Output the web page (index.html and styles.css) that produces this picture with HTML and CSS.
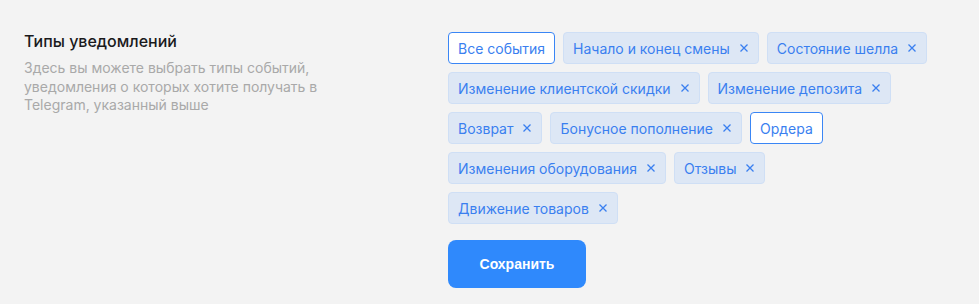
FILE: index.html
```html
<!DOCTYPE html>
<html>
<head>
    <meta charset="UTF-8">
    <title>Типы уведомлений</title>
    <link rel="stylesheet" href="styles.css">
</head>
<body>
    <div class="section">
        <div class="section-info">
            <div class="section-title">Типы уведомлений</div>
            <div class="section-description">Здесь вы можете выбрать типы событий, уведомления о которых хотите получать в Telegram, указанный выше</div>
        </div>

        <div class="section-body">
            <div class="tags">
                <button class="tag tag-outline">Все события</button>
                <button class="tag">Начало и конец смены <svg class="tag-remove" viewBox="0 0 8 8"><path d="M0.5 0.5L7.5 7.5M7.5 0.5L0.5 7.5"/></svg></button>
                <button class="tag">Состояние шелла <svg class="tag-remove" viewBox="0 0 8 8"><path d="M0.5 0.5L7.5 7.5M7.5 0.5L0.5 7.5"/></svg></button>
                <button class="tag">Изменение клиентской скидки <svg class="tag-remove" viewBox="0 0 8 8"><path d="M0.5 0.5L7.5 7.5M7.5 0.5L0.5 7.5"/></svg></button>
                <button class="tag">Изменение депозита <svg class="tag-remove" viewBox="0 0 8 8"><path d="M0.5 0.5L7.5 7.5M7.5 0.5L0.5 7.5"/></svg></button>
                <button class="tag">Возврат <svg class="tag-remove" viewBox="0 0 8 8"><path d="M0.5 0.5L7.5 7.5M7.5 0.5L0.5 7.5"/></svg></button>
                <button class="tag">Бонусное пополнение <svg class="tag-remove" viewBox="0 0 8 8"><path d="M0.5 0.5L7.5 7.5M7.5 0.5L0.5 7.5"/></svg></button>
                <button class="tag tag-outline">Ордера</button>
                <button class="tag">Изменения оборудования <svg class="tag-remove" viewBox="0 0 8 8"><path d="M0.5 0.5L7.5 7.5M7.5 0.5L0.5 7.5"/></svg></button>
                <button class="tag">Отзывы <svg class="tag-remove" viewBox="0 0 8 8"><path d="M0.5 0.5L7.5 7.5M7.5 0.5L0.5 7.5"/></svg></button>
                <button class="tag">Движение товаров <svg class="tag-remove" viewBox="0 0 8 8"><path d="M0.5 0.5L7.5 7.5M7.5 0.5L0.5 7.5"/></svg></button>
            </div>
            <button class="save-btn">Сохранить</button>
        </div>
    </div>
</body>
</html>
```

FILE: styles.css
```css
body {
    margin: 0;
    background-color: #f3f3f3;
    font-family: Inter, "Noto Sans", sans-serif;
}
.section {
    display: flex;
    padding: 32px 24px 16px;
}
.section-info {
    width: 300px;
    margin-right: 124px;
}
.section-title {
    font-size: 16px;
    font-weight: 500;
    color: #1a1a1c;
    line-height: 18px;
}
.section-description {
    margin-top: 9px;
    font-size: 14px;
    line-height: 18.5px;
    color: #a9a9a9;
}
.section-body {
    flex: 1;
    display: flex;
    flex-direction: column;
    align-items: flex-start;
    gap: 16px;
}
.tags {
    display: flex;
    flex-wrap: wrap;
    gap: 8px;
    width: 490px;
}
.tag {
    display: flex;
    align-items: center;
    gap: 10px;
    height: 32px;
    padding: 0 10px 0 9px;
    border: 1px solid #cfdff5;
    border-radius: 4px;
    background-color: #dde7f5;
    color: #3a7ff0;
    font-family: inherit;
    font-size: 14px;
    cursor: pointer;
}
.tag-outline {
    padding-right: 9px;
    background-color: #fff;
    border-color: #3a86f5;
}
.tag-remove {
    width: 8px;
    height: 8px;
    fill: none;
    stroke: currentColor;
    stroke-width: 1.3;
}
.save-btn {
    width: 138px;
    height: 48px;
    border: none;
    border-radius: 8px;
    background-color: #2f89fc;
    color: #fff;
    font-family: "Liberation Sans", Arial, sans-serif;
    font-weight: 700;
    font-size: 14px;
    cursor: pointer;
}
```
